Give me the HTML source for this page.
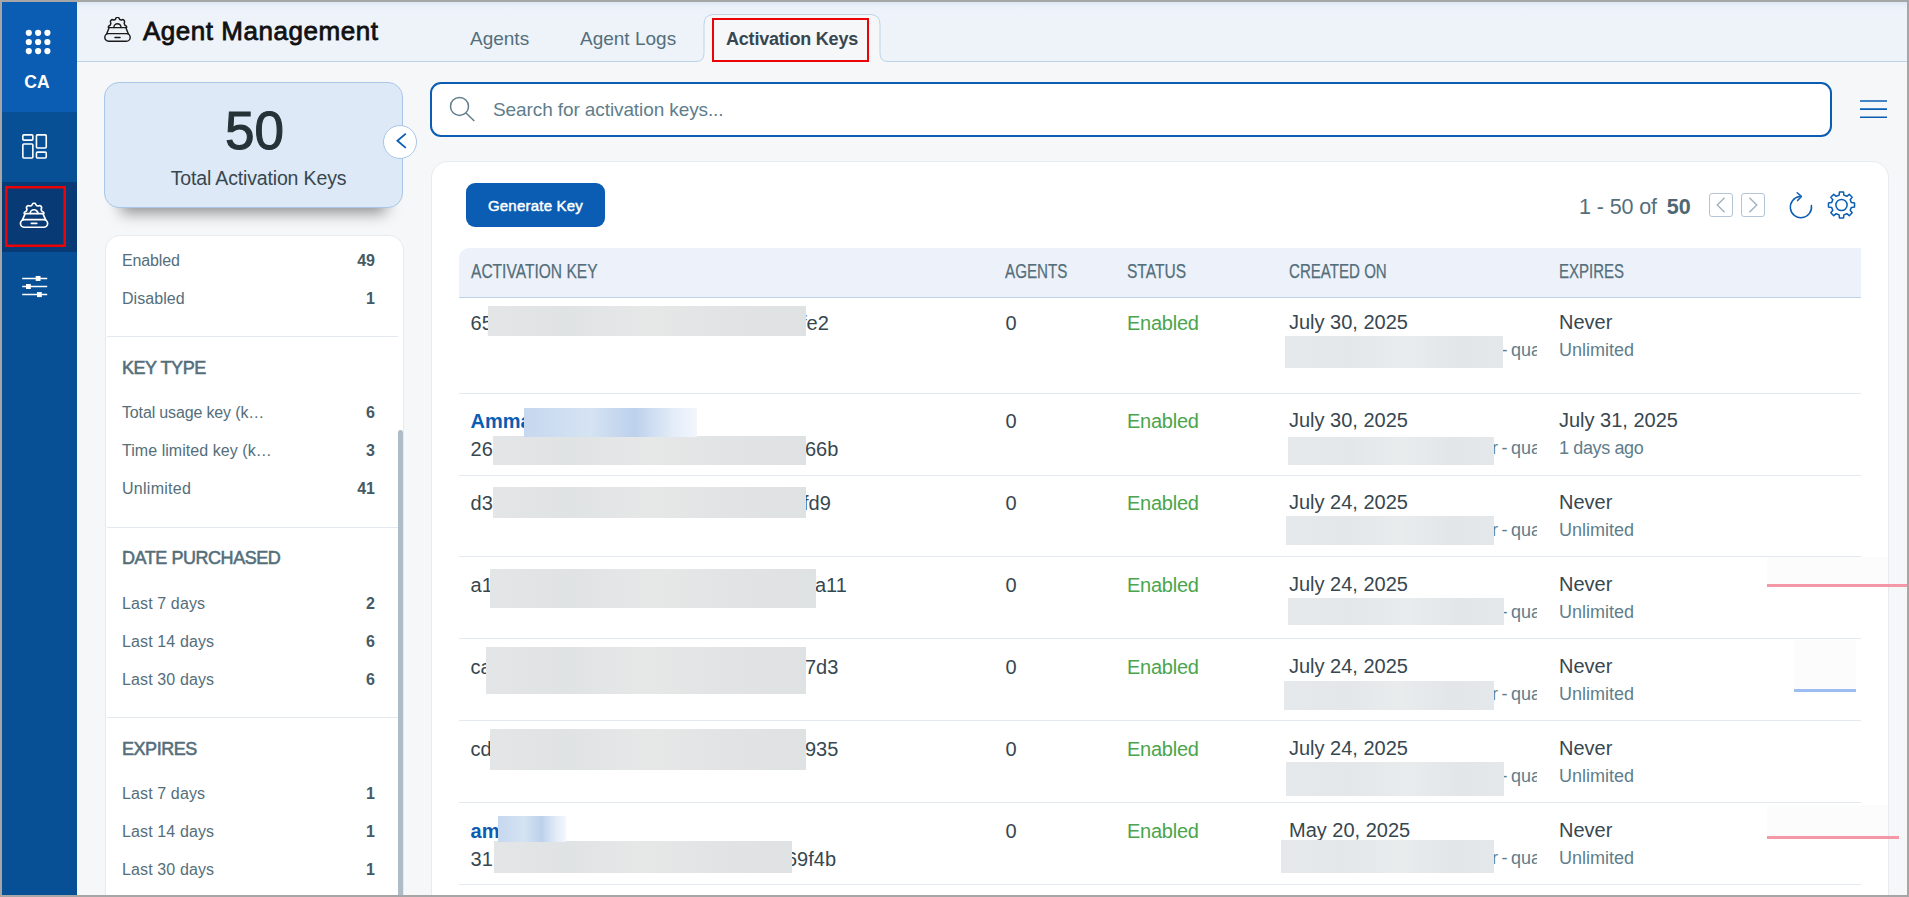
<!DOCTYPE html>
<html lang="en">
<head>
<meta charset="utf-8">
<title>Agent Management - Activation Keys</title>
<style>
*{box-sizing:border-box;margin:0;padding:0}
html,body{width:1909px;height:897px;overflow:hidden}
body{font-family:"Liberation Sans",sans-serif;background:#a6a6a6;color:#37474f;position:relative}
.abs{position:absolute}
#app{position:absolute;left:2px;top:2px;width:1905px;height:893px;background:#f6f7f9;overflow:hidden}
/* sidebar */
#side{position:absolute;left:0;top:0;width:75px;height:893px;background:#075095}
#side .top{position:absolute;left:0;top:0;width:75px;height:110px;background:#0a5db3}
#side .act{position:absolute;left:0;top:180px;width:75px;height:70px;background:#083a75}
#side .redbox{position:absolute;left:3px;top:184px;width:61px;height:61px;border:2px solid #ea0408;box-shadow:inset 0 0 0 .6px #ea0408}
#side .ca{position:absolute;left:0;top:70.4px;width:70px;text-align:center;color:#fff;font-weight:bold;font-size:17.5px;line-height:20px}
/* header */
#hdr{position:absolute;left:75px;top:0;width:1830px;height:60px;background:linear-gradient(#dde8f5,#e9f0f8 4px,#eef3fa 8px);border-bottom:1px solid #bcd3ea}
#title{position:absolute;left:141px;top:12px;letter-spacing:.53px;font-size:26px;line-height:34px;color:#111;-webkit-text-stroke:.8px #111;white-space:nowrap}
.tab{position:absolute;top:25px;font-size:19px;line-height:24px;color:#546e7a;white-space:nowrap}
#tabact{position:absolute;left:692px;top:12px;width:196px;height:50px}
#tabred{position:absolute;left:710px;top:16px;width:157px;height:44px;border:2px solid #ea0408}
#tabtxt{position:absolute;left:724px;top:24.5px;font-size:18px;line-height:24px;letter-spacing:-.2px;font-weight:bold;color:#37474f;white-space:nowrap}
/* summary card */
#sum{position:absolute;left:102px;top:80px;width:299px;height:126px;background:#dde9f6;border:1px solid #a9c6e6;border-radius:15px;box-shadow:0 22px 14px -17px rgba(0,0,0,.42)}
#sum .n{position:absolute;left:1px;top:18px;width:297px;text-align:center;font-size:53px;line-height:60px;color:#263238;-webkit-text-stroke:1.1px #263238}
#sum .l{position:absolute;left:0;top:84px;width:307px;text-align:center;font-size:19.5px;letter-spacing:-.15px;line-height:22px;color:#37474f}
#coll{position:absolute;left:381px;top:123px;width:34px;height:34px;border-radius:50%;background:#fff;border:1px solid #a9c6e6}
/* filter panel */
#filt{position:absolute;left:103px;top:233px;width:299px;height:700px;background:#fff;border:1px solid #e6ebf0;border-radius:15px}
.fl{position:absolute;left:120px;font-size:16px;line-height:20px;letter-spacing:-.15px;color:#546e7a;white-space:nowrap}
.fc{position:absolute;left:299px;width:74px;text-align:right;font-size:16px;line-height:20px;color:#455a64;font-weight:bold}
.fh{position:absolute;left:120px;font-size:18px;line-height:24px;letter-spacing:-.45px;color:#546e7a;white-space:nowrap;-webkit-text-stroke:.55px #546e7a}
.fsep{position:absolute;left:105px;width:291px;height:1px;background:#e3e9ee}
#fscroll{position:absolute;left:396px;top:428px;width:5px;height:480px;background:#adbcc6;border-radius:2.5px 2.5px 0 0}
/* search */
#search{position:absolute;left:428px;top:80px;width:1402px;height:55px;background:#fff;border:2px solid #0a5db3;border-radius:11px}
#search .ph{position:absolute;left:61px;top:14px;font-size:19px;line-height:24px;letter-spacing:-.1px;color:#607d8b;white-space:nowrap}
/* main panel */
#main{position:absolute;left:429px;top:159px;width:1458px;height:800px;background:#fff;border:1px solid #e6ebf0;border-radius:17px}
#gen{position:absolute;left:464px;top:181px;width:139px;height:44px;background:#0a5db3;border-radius:9px;color:#fff;font-size:15px;line-height:45px;text-align:center;-webkit-text-stroke:.45px #fff;letter-spacing:.22px}
#pg{position:absolute;top:191px;letter-spacing:-.1px;font-size:21.5px;line-height:28px;color:#546e7a;white-space:nowrap}
.pbox{position:absolute;top:191px;width:24px;height:24px;border:1px solid #b4c6d6;border-radius:3px}
#thead{position:absolute;left:457px;top:246px;width:1402px;height:50px;background:#edf2fa;border-bottom:1px solid #bcd3ea;border-radius:10px 0 0 0}
.th{position:absolute;top:257.4px;font-size:20px;line-height:24px;color:#546e7a;white-space:nowrap;transform-origin:0 50%;-webkit-text-stroke:.25px #546e7a}
.rsep{position:absolute;left:457px;width:1402px;height:1px;background:#e3e9ee}
.c{position:absolute;font-size:20px;line-height:24px;color:#37474f;white-space:nowrap}
.s{position:absolute;font-size:18px;line-height:24px;color:#607d8b;white-space:nowrap}
.en{color:#4aa54d;letter-spacing:-.25px}
.sub{left:1490px;width:45px;overflow:hidden;word-spacing:-1.5px}
.lnk{color:#0a5db3;font-weight:bold}
.blur{position:absolute;background:linear-gradient(90deg,#e3e5e6,#e0e3e4 25%,#e6e8e8 50%,#e1e3e4 75%,#dfe2e3)}
.b2{background:linear-gradient(90deg,#e6e9eb,#e3e7e9 30%,#e9eced 55%,#e2e6e8 80%,#e5e8ea)}
.bblur{position:absolute;background:linear-gradient(90deg,#c6d8ef,#d5e3f3 38%,#bdd1ec 64%,#e3ecf8 86%,#f3f7fc)}
</style>
</head>
<body>
<div id="app">
<div id="hdr"></div>
<div id="side"><div class="top"></div><div class="act"></div><div class="redbox"></div><div class="ca">CA</div></div>
<div id="title">Agent Management</div>
<div class="tab" style="left:468px">Agents</div>
<div class="tab" style="left:578px">Agent Logs</div>
<svg id="tabact" viewBox="0 0 196 50"><path d="M0 47.5 H2 Q10 47.5 10 39.5 V10.5 Q10 .5 20 .5 H176 Q186 .5 186 10.5 V39.5 Q186 47.5 194 47.5 H196 V50 H0 Z" fill="#f6f7f9"/><path d="M0 47.5 H2 Q10 47.5 10 39.5 V10.5 Q10 .5 20 .5 H176 Q186 .5 186 10.5 V39.5 Q186 47.5 194 47.5 H196" fill="none" stroke="#bcd3ea" stroke-width="1"/></svg>
<div id="tabtxt">Activation Keys</div>
<div id="tabred"></div>

<div id="sum"><div class="n">50</div><div class="l">Total Activation Keys</div></div>
<div id="filt"></div>
<!--FILT-->
<div class="fl" style="top:249px">Enabled</div><div class="fc" style="top:249px">49</div>
<div class="fl" style="top:287px;letter-spacing:.05px">Disabled</div><div class="fc" style="top:287px">1</div>
<div class="fl" style="top:401px">Total usage key (k…</div><div class="fc" style="top:401px">6</div>
<div class="fl" style="top:439px;letter-spacing:.05px">Time limited key (k…</div><div class="fc" style="top:439px">3</div>
<div class="fl" style="top:477px;letter-spacing:.27px">Unlimited</div><div class="fc" style="top:477px">41</div>
<div class="fl" style="top:592px;letter-spacing:.12px">Last 7 days</div><div class="fc" style="top:592px">2</div>
<div class="fl" style="top:630px;letter-spacing:.12px">Last 14 days</div><div class="fc" style="top:630px">6</div>
<div class="fl" style="top:668px;letter-spacing:.12px">Last 30 days</div><div class="fc" style="top:668px">6</div>
<div class="fl" style="top:782px;letter-spacing:.12px">Last 7 days</div><div class="fc" style="top:782px">1</div>
<div class="fl" style="top:820px;letter-spacing:.12px">Last 14 days</div><div class="fc" style="top:820px">1</div>
<div class="fl" style="top:858px;letter-spacing:.12px">Last 30 days</div><div class="fc" style="top:858px">1</div>
<div class="fh" style="top:353.5px">KEY TYPE</div>
<div class="fh" style="top:543.5px">DATE PURCHASED</div>
<div class="fh" style="top:734.5px">EXPIRES</div>
<div class="fsep" style="top:334px"></div>
<div class="fsep" style="top:525px"></div>
<div class="fsep" style="top:715px"></div>
<div id="fscroll"></div>
<!--/FILT-->
<div id="coll"></div>
<div id="search"><div class="ph">Search for activation keys...</div></div>
<div id="main"></div>
<div id="gen">Generate Key</div>
<div id="thead"></div>
<!--ICONS-->
<svg class="abs" style="left:0;top:0" width="75" height="330" viewBox="0 0 75 330"><g fill="#fff"><circle cx="26.8" cy="30.8" r="3.1"/><circle cx="36.1" cy="30.8" r="3.1"/><circle cx="45.4" cy="30.8" r="3.1"/><circle cx="26.8" cy="40.0" r="3.1"/><circle cx="36.1" cy="40.0" r="3.1"/><circle cx="45.4" cy="40.0" r="3.1"/><circle cx="26.8" cy="49.1" r="3.1"/><circle cx="36.1" cy="49.1" r="3.1"/><circle cx="45.4" cy="49.1" r="3.1"/></g><g fill="none" stroke="#fff" stroke-width="1.6"><rect x="20.85" y="132.85" width="10" height="5.3" rx="1"/><rect x="20.85" y="142.05" width="10" height="13.9" rx="1"/><rect x="34.45" y="132.85" width="9.8" height="13.1" rx="1"/><rect x="34.45" y="150.15" width="9.8" height="5.8" rx="1"/></g><g transform="translate(17.6 201) scale(1.07 1.0)"><g fill="none" stroke="#fff" stroke-width="1.6" stroke-linejoin="round" stroke-linecap="round"><rect x="0.8" y="16.6" width="25.4" height="7.6" rx="3.8"/><path d="M11 20.4 H16"/><path d="M2.6 17 L5.2 10.6 H21.8 L24.4 17"/><path d="M4.33 10.50 L4.35 9.79 L4.70 9.12 L5.46 8.59 L6.20 8.17 L6.42 7.63 L6.62 7.08 L6.85 6.56 L6.67 5.74 L6.44 4.78 L6.48 3.93 L6.91 3.40 L7.37 2.91 L7.94 2.56 L8.81 2.74 L9.63 3.03 L10.20 2.95 L10.68 2.71 L11.17 2.51 L11.59 1.96 L12.01 1.10 L12.54 0.34 L13.18 0.29 L13.82 0.29 L14.46 0.34 L14.99 1.10 L15.41 1.96 L15.83 2.51 L16.32 2.71 L16.80 2.95 L17.37 3.03 L18.19 2.74 L19.06 2.56 L19.63 2.91 L20.09 3.40 L20.52 3.93 L20.56 4.78 L20.33 5.74 L20.15 6.56 L20.38 7.08 L20.58 7.63 L20.80 8.17 L21.54 8.59 L22.30 9.12 L22.65 9.79 L22.67 10.50"/><path d="M9.9 10.4 A3.6 3.6 0 0 1 17.1 10.4"/></g></g><g stroke="#fff" stroke-width="1.5" fill="#fff"><path d="M20.2 276.45 H45.2 M20.2 284.5 H45.2 M20.2 292.6 H45.2" fill="none"/><rect x="33.7" y="273.95" width="4.8" height="5" stroke="none"/><rect x="24" y="282" width="4.8" height="5" stroke="none"/><rect x="35" y="290.1" width="4.8" height="5" stroke="none"/></g></svg>
<svg class="abs" style="left:102px;top:15px" width="28" height="26" viewBox="0 0 28 26"><g fill="none" stroke="#1a1a1a" stroke-width="1.45" stroke-linejoin="round" stroke-linecap="round"><rect x="0.8" y="16.6" width="25.4" height="7.6" rx="3.8"/><path d="M11 20.4 H16"/><path d="M2.6 17 L5.2 10.6 H21.8 L24.4 17"/><path d="M4.33 10.50 L4.35 9.79 L4.70 9.12 L5.46 8.59 L6.20 8.17 L6.42 7.63 L6.62 7.08 L6.85 6.56 L6.67 5.74 L6.44 4.78 L6.48 3.93 L6.91 3.40 L7.37 2.91 L7.94 2.56 L8.81 2.74 L9.63 3.03 L10.20 2.95 L10.68 2.71 L11.17 2.51 L11.59 1.96 L12.01 1.10 L12.54 0.34 L13.18 0.29 L13.82 0.29 L14.46 0.34 L14.99 1.10 L15.41 1.96 L15.83 2.51 L16.32 2.71 L16.80 2.95 L17.37 3.03 L18.19 2.74 L19.06 2.56 L19.63 2.91 L20.09 3.40 L20.52 3.93 L20.56 4.78 L20.33 5.74 L20.15 6.56 L20.38 7.08 L20.58 7.63 L20.80 8.17 L21.54 8.59 L22.30 9.12 L22.65 9.79 L22.67 10.50"/><path d="M9.9 10.4 A3.6 3.6 0 0 1 17.1 10.4"/></g></svg>
<svg class="abs" style="left:381.6px;top:122.2px" width="34" height="34" viewBox="0 0 34 34"><path d="M21.8 9.6 L13.4 16.7 L21.8 23.9" fill="none" stroke="#0a5db3" stroke-width="1.8"/></svg>
<svg class="abs" style="left:445px;top:92px" width="32" height="32" viewBox="0 0 32 32"><g fill="none" stroke="#607d8b" stroke-width="1.5"><circle cx="12.5" cy="12.4" r="9"/><path d="M19 19 L27.3 27"/></g></svg>
<svg class="abs" style="left:1856px;top:94px" width="32" height="28" viewBox="0 0 32 28"><path d="M2 5 H29 M2 13.1 H29 M2 21.2 H29" stroke="#0a5db3" stroke-width="1.6" fill="none"/></svg>
<div id="pg" style="left:1577px">1 - 50 of <b style="margin-left:4px;color:#4f6874">50</b></div>
<div class="pbox" style="left:1707px"></div><div class="pbox" style="left:1739px"></div>
<svg class="abs" style="left:1707px;top:191px" width="60" height="24" viewBox="0 0 60 24"><path d="M15.6 4.8 L8.2 12 L15.6 19.2 M40.4 4.8 L47.8 12 L40.4 19.2" fill="none" stroke="#9db0be" stroke-width="1.3"/></svg>
<svg class="abs" style="left:1783px;top:188px" width="32" height="32" viewBox="0 0 32 32"><g fill="none" stroke="#0a5db3" stroke-width="1.5" stroke-linecap="round" stroke-linejoin="round"><path d="M14.5 6.6 A10.6 10.6 0 1 0 26.4 15.5"/><path d="M12.2 2.8 L16.4 6.4 L12.6 10.6"/></g></svg>
<svg class="abs" style="left:1824px;top:188px" width="32" height="32" viewBox="0 0 32 32"><g fill="none" stroke="#0a5db3" stroke-width="1.5" stroke-linejoin="round"><path d="M17.88 5.08 L17.56 1.96 L13.44 1.96 L13.12 5.08 L10.17 6.30 L7.74 4.32 L4.82 7.24 L6.80 9.67 L5.58 12.62 L2.46 12.94 L2.46 17.06 L5.58 17.38 L6.80 20.33 L4.82 22.76 L7.74 25.68 L10.17 23.70 L13.12 24.92 L13.44 28.04 L17.56 28.04 L17.88 24.92 L20.83 23.70 L23.26 25.68 L26.18 22.76 L24.20 20.33 L25.42 17.38 L28.54 17.06 L28.54 12.94 L25.42 12.62 L24.20 9.67 L26.18 7.24 L23.26 4.32 L20.83 6.30 Z"/><circle cx="15.5" cy="15" r="5.6"/></g></svg>
<!--/ICONS-->
<!--TABLE-->
<div class="th" style="left:468.8px;transform:scaleX(0.778)">ACTIVATION KEY</div>
<div class="th" style="left:1003.3px;transform:scaleX(0.76)">AGENTS</div>
<div class="th" style="left:1124.7px;transform:scaleX(0.777)">STATUS</div>
<div class="th" style="left:1286.6px;transform:scaleX(0.754)">CREATED ON</div>
<div class="th" style="left:1556.7px;transform:scaleX(0.749)">EXPIRES</div>
<div class="rsep" style="top:391px"></div>
<div class="rsep" style="top:473px"></div>
<div class="rsep" style="top:554px"></div>
<div class="rsep" style="top:636px"></div>
<div class="rsep" style="top:718px"></div>
<div class="rsep" style="top:800px"></div>
<div class="rsep" style="top:882px"></div>
<div class="c" style="left:468.6px;top:309px">65</div>
<div class="c" style="left:799px;top:309px">fe2</div>
<div class="c" style="left:1003.5px;top:309px">0</div>
<div class="c en" style="left:1125px;top:309px">Enabled</div>
<div class="c" style="left:1287px;top:308px">July 30, 2025</div>
<div class="s sub" style="top:336px">r - quay</div>
<div class="c" style="left:1557px;top:308px">Never</div>
<div class="s" style="left:1557px;top:336px">Unlimited</div>
<div class="c lnk" style="left:468.6px;top:407px">Amma</div>
<div class="c" style="left:468.6px;top:435px">26</div>
<div class="c" style="left:803px;top:435px">66b</div>
<div class="c" style="left:1003.5px;top:407px">0</div>
<div class="c en" style="left:1125px;top:407px">Enabled</div>
<div class="c" style="left:1287px;top:406px">July 30, 2025</div>
<div class="s sub" style="top:434px">r - quay</div>
<div class="c" style="left:1557px;top:406px">July 31, 2025</div>
<div class="s" style="left:1557px;top:434px;letter-spacing:-.37px">1 days ago</div>
<div class="c" style="left:468.6px;top:489px">d3</div>
<div class="c" style="left:801px;top:489px">fd9</div>
<div class="c" style="left:1003.5px;top:489px">0</div>
<div class="c en" style="left:1125px;top:489px">Enabled</div>
<div class="c" style="left:1287px;top:488px">July 24, 2025</div>
<div class="s sub" style="top:516px">r - quay</div>
<div class="c" style="left:1557px;top:488px">Never</div>
<div class="s" style="left:1557px;top:516px">Unlimited</div>
<div class="c" style="left:468.6px;top:571px">a1</div>
<div class="c" style="left:813px;top:571px">a11</div>
<div class="c" style="left:1003.5px;top:571px">0</div>
<div class="c en" style="left:1125px;top:571px">Enabled</div>
<div class="c" style="left:1287px;top:570px">July 24, 2025</div>
<div class="s sub" style="top:598px">r - quay</div>
<div class="c" style="left:1557px;top:570px">Never</div>
<div class="s" style="left:1557px;top:598px">Unlimited</div>
<div class="c" style="left:468.6px;top:653px">ca</div>
<div class="c" style="left:803px;top:653px">7d3</div>
<div class="c" style="left:1003.5px;top:653px">0</div>
<div class="c en" style="left:1125px;top:653px">Enabled</div>
<div class="c" style="left:1287px;top:652px">July 24, 2025</div>
<div class="s sub" style="top:680px">r - quay</div>
<div class="c" style="left:1557px;top:652px">Never</div>
<div class="s" style="left:1557px;top:680px">Unlimited</div>
<div class="c" style="left:468.6px;top:735px">cd</div>
<div class="c" style="left:803px;top:735px">935</div>
<div class="c" style="left:1003.5px;top:735px">0</div>
<div class="c en" style="left:1125px;top:735px">Enabled</div>
<div class="c" style="left:1287px;top:734px">July 24, 2025</div>
<div class="s sub" style="top:762px">r - quay</div>
<div class="c" style="left:1557px;top:734px">Never</div>
<div class="s" style="left:1557px;top:762px">Unlimited</div>
<div class="c lnk" style="left:468.6px;top:817px">am</div>
<div class="c" style="left:468.6px;top:845px">31</div>
<div class="c" style="left:784px;top:845px">69f4b</div>
<div class="c" style="left:1003.5px;top:817px">0</div>
<div class="c en" style="left:1125px;top:817px">Enabled</div>
<div class="c" style="left:1287px;top:816px">May 20, 2025</div>
<div class="s sub" style="top:844px">r - quay</div>
<div class="c" style="left:1557px;top:816px">Never</div>
<div class="s" style="left:1557px;top:844px">Unlimited</div>
<div class="blur" style="left:486px;top:304px;width:318px;height:30px"></div>
<div class="blur" style="left:491px;top:434px;width:313px;height:29px"></div>
<div class="blur" style="left:491px;top:485px;width:313px;height:31px"></div>
<div class="blur" style="left:488px;top:567px;width:326px;height:39px"></div>
<div class="blur" style="left:484px;top:645px;width:320px;height:47px"></div>
<div class="blur" style="left:488px;top:727px;width:316px;height:41px"></div>
<div class="blur" style="left:492px;top:839px;width:298px;height:32px"></div>
<div class="blur b2" style="left:1283px;top:334px;width:218px;height:32px"></div>
<div class="blur b2" style="left:1286px;top:435px;width:206px;height:28px"></div>
<div class="blur b2" style="left:1284px;top:514px;width:208px;height:29px"></div>
<div class="blur b2" style="left:1286px;top:596px;width:216px;height:27px"></div>
<div class="blur b2" style="left:1282px;top:679px;width:210px;height:29px"></div>
<div class="blur b2" style="left:1284px;top:760px;width:218px;height:34px"></div>
<div class="blur b2" style="left:1279px;top:838px;width:213px;height:33px"></div>
<div class="bblur" style="left:522px;top:406px;width:173px;height:29px"></div>
<div class="bblur" style="left:496px;top:814px;width:68px;height:26px"></div>
<div class="abs" style="left:1765px;top:555px;width:121px;height:27px;background:#fcfcfc"></div>
<div class="abs" style="left:1792px;top:638px;width:62px;height:49px;background:#fcfcfc"></div>
<div class="abs" style="left:1765px;top:803px;width:121px;height:31px;background:#fcfcfc"></div>
<div class="abs" style="left:1765px;top:582px;width:140px;height:3px;background:#f497a6"></div>
<div class="abs" style="left:1792px;top:687px;width:62px;height:3px;background:#9dbdf0"></div>
<div class="abs" style="left:1765px;top:834px;width:132px;height:3px;background:#f497a6"></div>
<!--/TABLE-->
</div>
</body>
</html>
